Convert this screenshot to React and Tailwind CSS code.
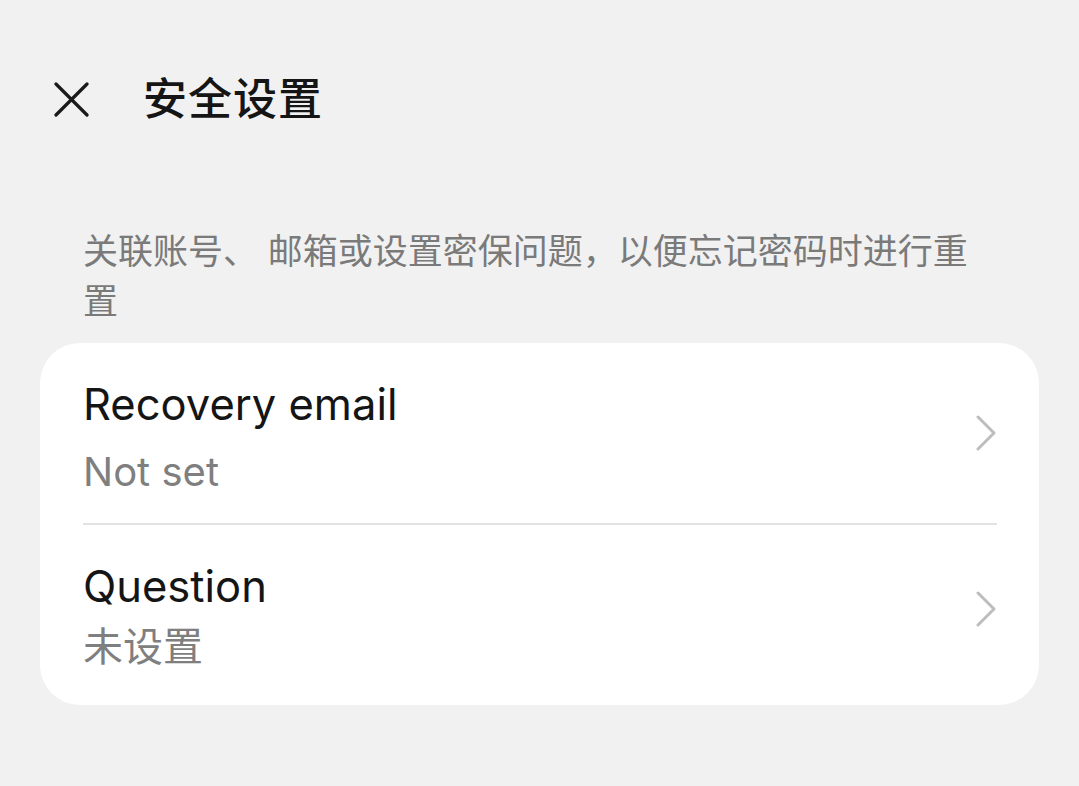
export default function App() {
  const font = { fontFamily: 'Inter, "Noto Sans CJK SC", sans-serif' };
  const Chevron = ({ cls }) => (
    <svg width="22" height="36" viewBox="0 0 22 36" fill="none" className={cls}>
      <path d="M3 2 L19 18 L3 34" stroke="#bdbdbd" strokeWidth="3" strokeLinecap="round" strokeLinejoin="round" />
    </svg>
  );
  const Row = ({ title, sub, subCls, chevCls }) => (
    <div className="flex items-center justify-between h-[180px] pr-[42px]">
      <div className="flex flex-col pt-[10px]">
        <div className="text-[43.5px] leading-[56px] text-[#151515]">{title}</div>
        <div className={subCls}>{sub}</div>
      </div>
      <Chevron cls={chevCls} />
    </div>
  );
  return (
    <div className="w-[1079px] h-[786px] bg-[#f1f1f1] overflow-hidden" style={font}>
      <div className="flex items-center h-[200px] pl-[54px] pb-[2px]">
        <svg width="35" height="35" viewBox="0 0 35 35" className="shrink-0">
          <path d="M2 2 L33 33 M33 2 L2 33" stroke="#1a1a1a" strokeWidth="3.2" strokeLinecap="round" />
        </svg>
        <div className="ml-[54px] text-[44px] font-medium text-[#151515] leading-none tracking-[1px]">安全设置</div>
      </div>
      <div className="ml-[83px] w-[890px] text-[35px] leading-[50px] text-[#7a7a7a] mt-[26px]">
        关联账号、 邮箱或设置密保问题，以便忘记密码时进行重置
      </div>
      <div className="mx-[40px] mt-[17px] bg-white rounded-[40px] pl-[43px]">
        <Row
          title="Recovery email"
          sub="Not set"
          subCls="text-[40px] leading-[56px] text-[#7f7f7f] mt-[12px]"
          chevCls="shrink-0"
        />
        <div className="h-[1.5px] bg-[#e2e2e2] mr-[42px]" />
        <Row
          title="Question"
          sub="未设置"
          subCls="text-[40px] leading-[56px] text-[#7f7f7f] mt-[5px] mb-[7px]"
          chevCls="shrink-0 -mt-[11px]"
        />
      </div>
    </div>
  );
}
